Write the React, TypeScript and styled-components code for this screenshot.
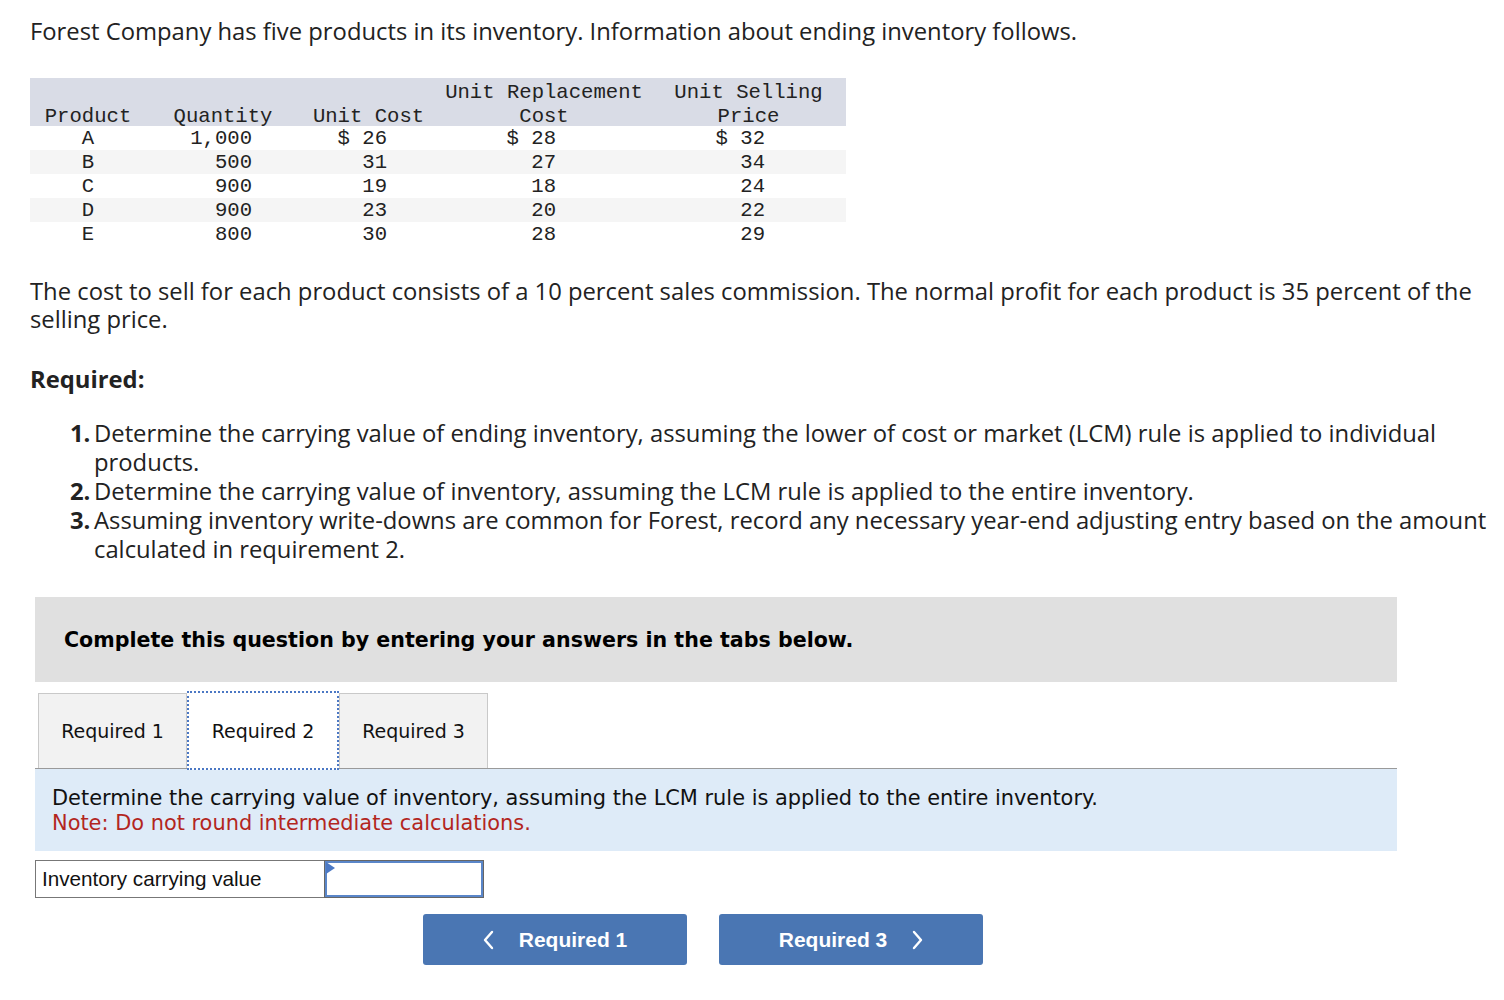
import React from "react";
import styled, { createGlobalStyle } from "styled-components";

const Global = createGlobalStyle`
  html, body { margin: 0; padding: 0; background: #fff; }
  body { font-family: "Open Sans", Lato, sans-serif; color: #222; }
`;

const Page = styled.div`
  padding: 17px 4px 0 30px;
  width: 1504px;
  box-sizing: border-box;
`;

const Para = styled.p<{ $top?: number }>`
  margin: ${(p) => p.$top ?? 0}px 0 0 0;
  font-size: 23.8px;
  line-height: 28px;
`;

const DataTable = styled.table`
  margin-top: 33px;
  border-collapse: collapse;
  font-family: "Liberation Mono", "Courier New", monospace;
  font-size: 20.6px;
  color: #222;
  table-layout: fixed;
  width: 816px;
`;

const HeadRow = styled.tr`
  background: #d9dce6;
`;

const HeadCell = styled.th`
  font-weight: normal;
  text-align: center;
  line-height: 19px;
  padding: 5px 0 0 0;
  white-space: pre;
`;

const BodyRow = styled.tr<{ $alt?: boolean }>`
  background: ${(p) => (p.$alt ? "#f5f5f5" : "#fff")};
`;

const Cell = styled.td<{ $pr?: number; $center?: boolean }>`
  line-height: 22px;
  padding: 2px ${(p) => p.$pr ?? 0}px 0 0;
  text-align: ${(p) => (p.$center ? "center" : "right")};
  white-space: pre;
`;

const Heading = styled.h3`
  margin: 32px 0 0 0;
  font-size: 23.8px;
  line-height: 28px;
  font-weight: bold;
`;

const List = styled.ol`
  margin: 26px 0 0 0;
  padding: 0 0 0 40px;
  list-style: none;
`;

const Item = styled.li`
  display: flex;
  font-size: 23.8px;
  line-height: 29px;
`;

const Num = styled.span`
  font-weight: bold;
  width: 24px;
  flex: none;
`;

const GrayBox = styled.div`
  margin: 33px 0 0 5px;
  width: 1362px;
  height: 85px;
  background: #e0e0e0;
  display: flex;
  align-items: center;
  padding-left: 29px;
  box-sizing: border-box;
  font-family: "DejaVu Sans", Verdana, sans-serif;
  font-weight: bold;
  font-size: 20.6px;
  color: #000;
`;

const Tabs = styled.div`
  margin: 11px 0 0 8px;
  display: flex;
  height: 75px;
`;

const Tab = styled.div<{ $active?: boolean }>`
  width: ${(p) => (p.$active ? 152 : 149)}px;
  box-sizing: border-box;
  display: flex;
  align-items: center;
  justify-content: center;
  font-family: "DejaVu Sans", Verdana, sans-serif;
  font-size: 19px;
  color: #111;
  background: ${(p) => (p.$active ? "#fff" : "#f2f2f2")};
  border: ${(p) => (p.$active ? "2px dotted #4b78c4" : "1px solid #c9c9c9")};
  border-bottom: ${(p) => (p.$active ? "2px dotted #4b78c4" : "none")};
  position: relative;
  z-index: ${(p) => (p.$active ? 1 : 0)};
  height: ${(p) => (p.$active ? 79 : 75)}px;
  margin-top: ${(p) => (p.$active ? -2 : 0)}px;
`;

const InfoPanel = styled.div`
  margin-left: 5px;
  width: 1362px;
  box-sizing: border-box;
  background: #deebf8;
  border-top: 1px solid #9a9a9a;
  padding: 17px 17px 15px 17px;
  font-family: "DejaVu Sans", Verdana, sans-serif;
  font-size: 20.9px;
  line-height: 25px;
  color: #111;
`;

const Note = styled.div`
  color: #b3261e;
`;

const InputRow = styled.div`
  margin: 9px 0 0 5px;
  display: flex;
  height: 38px;
`;

const Label = styled.div`
  width: 289px;
  box-sizing: border-box;
  border: 1px solid #777;
  border-right: none;
  display: flex;
  align-items: center;
  padding-left: 6px;
  font-family: "Liberation Sans", Arial, sans-serif;
  font-size: 20.7px;
  color: #111;
`;

const InputWrap = styled.div`
  position: relative;
  width: 160px;
  box-sizing: border-box;
  border: 1px solid #666;
  display: flex;
`;

const Input = styled.input`
  flex: 1;
  border: 2px solid #5a86c9;
  margin: 0;
  padding: 0;
  outline: none;
  background: #fff;
  min-width: 0;
`;

const Flag = styled.span`
  position: absolute;
  left: 1px;
  top: 1px;
  width: 0;
  height: 0;
  border-top: 6px solid transparent;
  border-bottom: 6px solid transparent;
  border-left: 9px solid #4b78c4;
`;

const NavRow = styled.div`
  margin: 16px 0 0 393px;
  display: flex;
  gap: 32px;
`;

const NavButton = styled.button`
  width: 264px;
  height: 51px;
  border: none;
  border-radius: 3px;
  background: #4a76b3;
  color: #fff;
  font-family: "Liberation Sans", Arial, sans-serif;
  font-weight: bold;
  font-size: 21px;
  display: flex;
  align-items: center;
  justify-content: center;
  gap: 24px;
  padding: 0;
  cursor: pointer;
`;

const Chevron = ({ dir }: { dir: "left" | "right" }) => (
  <svg width="12" height="20" viewBox="0 0 12 20" fill="none">
    <path
      d={dir === "left" ? "M9 2 L2 10 L9 18" : "M3 2 L10 10 L3 18"}
      stroke="#fff"
      strokeWidth="2.4"
      strokeLinecap="round"
      strokeLinejoin="round"
    />
  </svg>
);

const rows = [
  ["A", "1,000", "$ 26", "$ 28", "$ 32"],
  ["B", "500", "31", "27", "34"],
  ["C", "900", "19", "18", "24"],
  ["D", "900", "23", "20", "22"],
  ["E", "800", "30", "28", "29"],
];

const pads = [0, 48, 50, 95, 81];

export default function App() {
  return (
    <>
      <Global />
      <Page>
        <Para>
          Forest Company has five products in its inventory. Information about ending inventory follows.
        </Para>
        <DataTable>
          <colgroup>
            <col style={{ width: 116 }} />
            <col style={{ width: 154 }} />
            <col style={{ width: 137 }} />
            <col style={{ width: 214 }} />
            <col style={{ width: 195 }} />
          </colgroup>
          <thead>
            <HeadRow>
              <HeadCell />
              <HeadCell />
              <HeadCell />
              <HeadCell>Unit Replacement</HeadCell>
              <HeadCell>Unit Selling</HeadCell>
            </HeadRow>
            <HeadRow>
              <HeadCell>Product</HeadCell>
              <HeadCell>Quantity</HeadCell>
              <HeadCell>Unit Cost</HeadCell>
              <HeadCell>Cost</HeadCell>
              <HeadCell>Price</HeadCell>
            </HeadRow>
          </thead>
          <tbody>
            {rows.map((r, i) => (
              <BodyRow key={r[0]} $alt={i % 2 === 1}>
                {r.map((v, j) => (
                  <Cell key={j} $center={j === 0} $pr={pads[j]}>
                    {v}
                  </Cell>
                ))}
              </BodyRow>
            ))}
          </tbody>
        </DataTable>
        <Para $top={31}>
          The cost to sell for each product consists of a 10 percent sales commission. The normal profit for each product is 35 percent of the selling price.
        </Para>
        <Heading>Required:</Heading>
        <List>
          <Item>
            <Num>1.</Num>
            <span>
              Determine the carrying value of ending inventory, assuming the lower of cost or market (LCM) rule is applied to individual products.
            </span>
          </Item>
          <Item>
            <Num>2.</Num>
            <span>Determine the carrying value of inventory, assuming the LCM rule is applied to the entire inventory.</span>
          </Item>
          <Item>
            <Num>3.</Num>
            <span>
              Assuming inventory write-downs are common for Forest, record any necessary year-end adjusting entry based on the amount calculated in requirement 2.
            </span>
          </Item>
        </List>
        <GrayBox>Complete this question by entering your answers in the tabs below.</GrayBox>
        <Tabs>
          <Tab>Required 1</Tab>
          <Tab $active>Required 2</Tab>
          <Tab>Required 3</Tab>
        </Tabs>
        <InfoPanel>
          <div>Determine the carrying value of inventory, assuming the LCM rule is applied to the entire inventory.</div>
          <Note>Note: Do not round intermediate calculations.</Note>
        </InfoPanel>
        <InputRow>
          <Label>Inventory carrying value</Label>
          <InputWrap>
            <Flag />
            <Input aria-label="Inventory carrying value" />
          </InputWrap>
        </InputRow>
        <NavRow>
          <NavButton>
            <Chevron dir="left" />
            Required 1
          </NavButton>
          <NavButton>
            Required 3
            <Chevron dir="right" />
          </NavButton>
        </NavRow>
      </Page>
    </>
  );
}
